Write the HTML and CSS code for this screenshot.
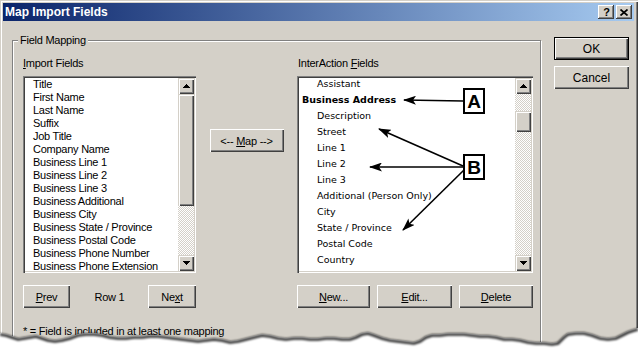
FILE: index.html
```html
<!DOCTYPE html>
<html>
<head>
<meta charset="utf-8">
<title>Map Import Fields</title>
<link rel="stylesheet" href="styles.css">
</head>
<body>
<div class="window">
  <div class="titlebar">
    <span class="title">Map Import Fields</span>
    <div class="caption-btns">
      <span class="cap-btn help">?</span>
      <span class="cap-btn close"><svg width="8" height="7" viewBox="0 0 8 7"><path d="M0.5 0.5 L7.5 6.5 M7.5 0.5 L0.5 6.5" stroke="#000" stroke-width="1.7"/></svg></span>
    </div>
  </div>
  <div class="client">
    <div class="group">
      <span class="group-label">Field Mapping</span>
      <div class="group-grid">
        <div class="label label-left"><u>I</u>mport Fields</div>
        <div class="label label-right">InterAction <u>F</u>ields</div>

        <div class="listbox import">
          <ul class="items">
            <li>Title</li>
            <li>First Name</li>
            <li>Last Name</li>
            <li>Suffix</li>
            <li>Job Title</li>
            <li>Company Name</li>
            <li>Business Line 1</li>
            <li>Business Line 2</li>
            <li>Business Line 3</li>
            <li>Business Additional</li>
            <li>Business City</li>
            <li>Business State / Province</li>
            <li>Business Postal Code</li>
            <li>Business Phone Number</li>
            <li>Business Phone Extension</li>
          </ul>
          <div class="scrollbar">
            <div class="sb-btn"><svg width="7" height="4" viewBox="0 0 7 4" shape-rendering="crispEdges"><path d="M3 0h1v1h1v1h1v1h1v1H0V3h1V2h1V1h1z" fill="#000"/></svg></div>
            <div class="sb-thumb thumb-import"></div>
            <div class="sb-btn sb-down"><svg width="7" height="4" viewBox="0 0 7 4" shape-rendering="crispEdges"><path d="M0 0h7v1H6v1H5v1H4v1H3V3H2V2H1V1H0z" fill="#000"/></svg></div>
          </div>
        </div>

        <div class="map-cell">
          <button class="btn map-btn"><span>&lt;-- <u>M</u>ap --&gt;</span></button>
        </div>

        <div class="listbox inter">
          <ul class="items">
            <li class="sub">Assistant</li>
            <li class="head">Business Address</li>
            <li class="sub">Description</li>
            <li class="sub">Street</li>
            <li class="sub">Line 1</li>
            <li class="sub">Line 2</li>
            <li class="sub">Line 3</li>
            <li class="sub">Additional (Person Only)</li>
            <li class="sub">City</li>
            <li class="sub">State / Province</li>
            <li class="sub">Postal Code</li>
            <li class="sub">Country</li>
          </ul>
          <div class="scrollbar">
            <div class="sb-btn"><svg width="7" height="4" viewBox="0 0 7 4" shape-rendering="crispEdges"><path d="M3 0h1v1h1v1h1v1h1v1H0V3h1V2h1V1h1z" fill="#000"/></svg></div>
            <div class="sb-thumb thumb-inter"></div>
            <div class="sb-btn sb-down"><svg width="7" height="4" viewBox="0 0 7 4" shape-rendering="crispEdges"><path d="M0 0h7v1H6v1H5v1H4v1H3V3H2V2H1V1H0z" fill="#000"/></svg></div>
          </div>
        </div>

        <div class="nav">
          <button class="btn prev-btn"><span><u>P</u>rev</span></button>
          <span class="row-label">Row 1</span>
          <button class="btn next-btn"><span>Ne<u>x</u>t</span></button>
        </div>

        <div class="actions">
          <button class="btn new-btn"><span><u>N</u>ew...</span></button>
          <button class="btn edit-btn"><span><u>E</u>dit...</span></button>
          <button class="btn delete-btn"><span><u>D</u>elete</span></button>
        </div>

        <div class="footnote">* = Field is included in at least one mapping</div>
      </div>
    </div>
    <div class="side">
      <button class="btn side-btn default">OK</button>
      <button class="btn side-btn">Cancel</button>
    </div>
  </div>

  <svg class="callouts" width="638" height="354" viewBox="0 0 638 354">
    <defs>
      <marker id="ah" viewBox="0 0 13 9" refX="12" refY="4.5" markerWidth="13" markerHeight="9" markerUnits="userSpaceOnUse" orient="auto">
        <path d="M0 0 L13 4.5 L0 9 L3 4.5 Z" fill="#000"/>
      </marker>
    </defs>
    <g stroke="#000" stroke-width="1.6" fill="none">
      <line x1="463" y1="101" x2="404" y2="100" marker-end="url(#ah)"/>
      <line x1="463" y1="166" x2="379" y2="129" marker-end="url(#ah)"/>
      <line x1="463" y1="167" x2="370" y2="167" marker-end="url(#ah)"/>
      <line x1="464" y1="170" x2="403" y2="230" marker-end="url(#ah)"/>
    </g>
    <rect x="464" y="89" width="20" height="24" fill="#fff" stroke="#000" stroke-width="2"/>
    <rect x="464" y="155" width="20" height="24" fill="#fff" stroke="#000" stroke-width="2"/>
    <text x="474" y="108" class="callout-letter">A</text>
    <text x="474" y="174" class="callout-letter">B</text>
  </svg>

  <svg class="tear" width="638" height="354" viewBox="0 0 638 354">
    <defs>
      <filter id="blur" x="-5%" y="-50%" width="110%" height="200%">
        <feGaussianBlur stdDeviation="1.3"/>
      </filter>
    </defs>
    <path d="M0 333 L6 334 L12 336 L18 338 L24 337 L30 336 L36 335 L42 337 L48 339 L55 340 L62 339 L70 337 L78 334 L86 333 L94 333 L102 334 L110 336 L118 337 L126 337 L134 336 L142 336 L150 335 L158 335 L166 336 L174 337 L182 338 L190 339 L198 340 L206 339 L214 338 L222 339 L230 341 L238 340 L246 338 L254 336 L262 334 L270 335 L278 337 L286 338 L294 337 L302 337 L310 338 L318 338 L326 337 L334 337 L342 338 L350 338 L356 336 L362 333 L368 332 L374 334 L382 337 L390 339 L398 340 L406 341 L414 342 L420 340 L426 336 L432 334 L440 334 L448 333 L456 333 L464 333 L472 334 L480 335 L488 335 L496 336 L504 338 L512 338 L520 339 L528 341 L536 342 L544 342 L552 343 L558 342 L564 336 L568 333 L576 332 L584 332 L592 334 L600 337 L608 338 L616 337 L622 334 L628 331 L634 329 L638 328 L638 354 L0 354 Z" fill="#fff"/>
    <path d="M0 333 L6 334 L12 336 L18 338 L24 337 L30 336 L36 335 L42 337 L48 339 L55 340 L62 339 L70 337 L78 334 L86 333 L94 333 L102 334 L110 336 L118 337 L126 337 L134 336 L142 336 L150 335 L158 335 L166 336 L174 337 L182 338 L190 339 L198 340 L206 339 L214 338 L222 339 L230 341 L238 340 L246 338 L254 336 L262 334 L270 335 L278 337 L286 338 L294 337 L302 337 L310 338 L318 338 L326 337 L334 337 L342 338 L350 338 L356 336 L362 333 L368 332 L374 334 L382 337 L390 339 L398 340 L406 341 L414 342 L420 340 L426 336 L432 334 L440 334 L448 333 L456 333 L464 333 L472 334 L480 335 L488 335 L496 336 L504 338 L512 338 L520 339 L528 341 L536 342 L544 342 L552 343 L558 342 L564 336 L568 333 L576 332 L584 332 L592 334 L600 337 L608 338 L616 337 L622 334 L628 331 L634 329 L638 328" fill="none" stroke="#000" stroke-width="2.6" stroke-opacity="0.85" filter="url(#blur)" transform="translate(0 1.5)"/>
  </svg>
</div>
</body>
</html>
```

FILE: styles.css
```css
* {
  box-sizing: border-box;
}

html,
body {
  margin: 0;
  padding: 0;
}

body {
  width: 638px;
  height: 354px;
  overflow: hidden;
  background: #fff;
  color: #000;
  font-family: "Liberation Sans", Arial, sans-serif;
  font-size: 11px;
  letter-spacing: -0.25px;
}

.window {
  position: relative;
  width: 638px;
  height: 354px;
  padding: 3px 4px 0 3px;
  background: #d4d0c8;
  overflow: hidden;
  box-shadow:
    inset 1px 1px 0 #d4d0c8,
    inset 2px 2px 0 #fff,
    inset -1px -1px 0 #404040,
    inset -2px -2px 0 #808080;
}

/* Title bar */
.titlebar {
  height: 18px;
  display: flex;
  align-items: center;
  justify-content: space-between;
  padding: 0 2px;
  background: linear-gradient(to right, #0a246a, #a6caf0);
}

.title {
  color: #fff;
  font-weight: bold;
  font-size: 12px;
  letter-spacing: 0;
  line-height: 14px;
}

.caption-btns {
  display: flex;
  gap: 2px;
}

.cap-btn {
  width: 16px;
  height: 14px;
  display: flex;
  align-items: center;
  justify-content: center;
  background: #d4d0c8;
  font-weight: bold;
  font-size: 11px;
  line-height: 14px;
  letter-spacing: 0;
  box-shadow:
    inset -1px -1px 0 #404040,
    inset 1px 1px 0 #fff,
    inset -2px -2px 0 #808080;
}

.cap-btn.help {
  padding-left: 1px;
}

/* Client area */
.client {
  display: flex;
  align-items: flex-start;
}

.group {
  position: relative;
  width: 529px;
  height: 320px;
  margin: 19px 0 0 9px;
  border: 1px solid #808080;
  box-shadow: 1px 1px 0 #fff, inset 1px 1px 0 #fff;
}

.group-label {
  position: absolute;
  top: -8px;
  left: 5px;
  padding: 0 2px;
  background: #d4d0c8;
  line-height: 14px;
}

.group-grid {
  display: grid;
  grid-template-columns: 173px 101px 236px;
  padding: 16px 0 0 10px;
}

.label {
  line-height: 13px;
  margin-bottom: 6px;
  white-space: nowrap;
}

.label-left {
  grid-column: 1;
  grid-row: 1;
}

.label-right {
  grid-column: 3;
  grid-row: 1;
  padding-left: 1px;
}

/* List boxes */
.listbox {
  height: 197px;
  display: flex;
  padding: 2px;
  background: #fff;
  overflow: hidden;
  box-shadow:
    inset 1px 1px 0 #808080,
    inset 2px 2px 0 #404040,
    inset -1px -1px 0 #fff,
    inset -2px -2px 0 #d4d0c8;
}

.listbox.import {
  grid-column: 1;
  grid-row: 2;
}

.listbox.inter {
  grid-column: 3;
  grid-row: 2;
}

.items {
  flex: 1;
  list-style: none;
  margin: 0;
  padding: 0;
  overflow: hidden;
}

.items li {
  white-space: nowrap;
}

.import .items li {
  line-height: 13px;
  padding-left: 8px;
}

.inter .items {
  font-family: "DejaVu Sans", Verdana, sans-serif;
  font-size: 9.5px;
  letter-spacing: 0;
}

.inter .items li {
  line-height: 16px;
}

.inter .items li:first-child {
  margin-top: -2px;
}

.inter .items li.sub {
  padding-left: 18px;
}

.inter .items li.head {
  padding-left: 3px;
  font-weight: bold;
}

/* Scrollbars */
.scrollbar {
  width: 16px;
  display: flex;
  flex-direction: column;
  background: repeating-conic-gradient(#d4d0c8 0 25%, #fff 0 50%) 0 0 / 2px 2px;
}

.sb-btn,
.sb-thumb {
  background: #d4d0c8;
  box-shadow:
    inset 1px 1px 0 #d4d0c8,
    inset 2px 2px 0 #fff,
    inset -1px -1px 0 #404040,
    inset -2px -2px 0 #808080;
}

.sb-btn {
  height: 16px;
  display: flex;
  align-items: center;
  justify-content: center;
}

.sb-btn svg {
  display: block;
}

.sb-down {
  margin-top: auto;
}

.thumb-import {
  height: 112px;
}

.thumb-inter {
  height: 21px;
  margin-top: 17px;
}

/* Buttons */
.btn {
  height: 23px;
  padding: 0;
  border: 0;
  background: #d4d0c8;
  color: #000;
  font: inherit;
  letter-spacing: inherit;
  display: flex;
  align-items: center;
  justify-content: center;
  white-space: pre;
  box-shadow:
    inset 1px 1px 0 #fff,
    inset -1px -1px 0 #404040,
    inset -2px -2px 0 #808080;
}

.btn.default {
  box-shadow:
    inset 0 0 0 1px #000,
    inset 2px 2px 0 #fff,
    inset -2px -2px 0 #404040,
    inset -3px -3px 0 #808080;
}

.map-cell {
  grid-column: 2;
  grid-row: 2;
  display: flex;
  justify-content: center;
  align-items: flex-start;
  padding-top: 53px;
}

.map-btn {
  width: 74px;
}

.nav {
  grid-column: 1;
  grid-row: 3;
  display: flex;
  align-items: center;
  justify-content: space-between;
  margin-top: 12px;
}

.prev-btn {
  width: 47px;
}

.next-btn {
  width: 48px;
}

.row-label {
  padding-left: 1px;
}

.actions {
  grid-column: 3;
  grid-row: 3;
  display: flex;
  gap: 7px;
  margin-top: 12px;
}

.new-btn {
  width: 73px;
}

.edit-btn {
  width: 75px;
}

.delete-btn {
  width: 74px;
}

.footnote {
  grid-column: 1 / -1;
  grid-row: 4;
  margin-top: 17px;
  line-height: 13px;
  white-space: nowrap;
}

/* Right-hand buttons */
.side {
  display: flex;
  flex-direction: column;
  gap: 6px;
  margin: 16px 0 0 13px;
}

.side-btn {
  width: 75px;
  font-size: 12px;
  letter-spacing: 0;
}

/* Overlays */
.callouts,
.tear {
  position: absolute;
  left: 0;
  top: 0;
  pointer-events: none;
}

.callout-letter {
  font-family: "Liberation Sans", Arial, sans-serif;
  font-weight: bold;
  font-size: 19px;
  letter-spacing: 0;
  text-anchor: middle;
  fill: #000;
}
```
